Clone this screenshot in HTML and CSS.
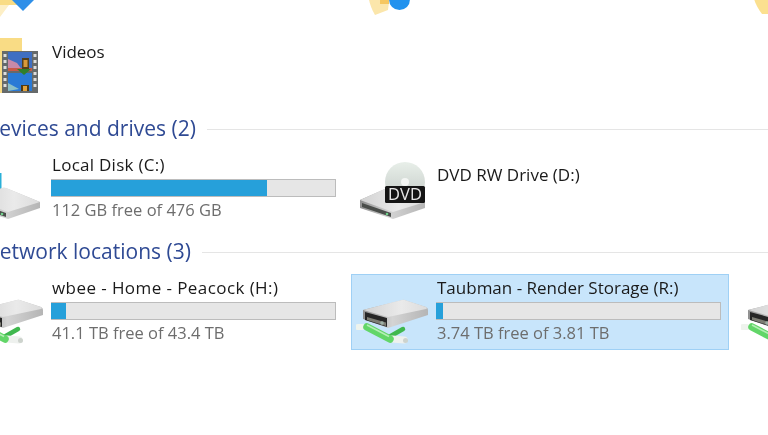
FILE: index.html
```html
<!DOCTYPE html>
<html lang="en">
<head>
<meta charset="utf-8">
<title>This PC</title>
<link rel="stylesheet" href="styles.css">
</head>
<body>
<svg class="defs" width="0" height="0" aria-hidden="true">
  <defs>
    <linearGradient id="topface" x1="0" y1="0" x2="1" y2="0">
      <stop offset="0" stop-color="#d2d2d2"/><stop offset="0.6" stop-color="#eaeaea"/><stop offset="1" stop-color="#dcdcdc"/>
    </linearGradient>
    <linearGradient id="frontface" x1="0" y1="0" x2="1" y2="0">
      <stop offset="0" stop-color="#8f8f8f"/><stop offset="0.45" stop-color="#d4d4d4"/><stop offset="1" stop-color="#b5b5b5"/>
    </linearGradient>
    <linearGradient id="disc" x1="0" y1="0" x2="0" y2="1">
      <stop offset="0" stop-color="#e8efe9"/><stop offset="1" stop-color="#c3c9c6"/>
    </linearGradient>
    <symbol id="netdrive" viewBox="0 0 72 72">
      <path d="M7 33 46 23 Q48 22.500 50 23.500 L70 30 Q72 31 72 33 L72 38 32 51 7 42Z" fill="url(#frontface)"/>
      <path d="M7 33 46 23 Q48 22.500 50 23.500 L70 30 Q72 31 70 32 L32 40Z" fill="url(#topface)"/>
      <path d="M9 35 31 41 31 50 9 43Z" fill="#262626"/>
      <path d="M11 40 30 45.500 30 49 11 43Z" fill="#7d7d74"/>
      <circle cx="26" cy="46" r="1.800" fill="#9fb0a6"/>
      <path d="M33 60 47 52" stroke="#3fb84e" stroke-width="4.500" stroke-linecap="round" fill="none"/>
      <path d="M6 50 2 50" stroke="#eef3ed" stroke-width="6" stroke-linecap="round" fill="none"/>
      <path d="M36 62 48 63" stroke="#eef1ee" stroke-width="7" stroke-linecap="round" fill="none"/>
      <circle cx="49.500" cy="63.500" r="2.500" fill="#cdd3cd"/>
      <path d="M11 50 34 62" stroke="#62d668" stroke-width="7.500" stroke-linecap="round" fill="none"/>
      <path d="M11 48 33 59.500" stroke="#b5efb5" stroke-width="1.500" fill="none"/>
    </symbol>
    <symbol id="localdrive" viewBox="0 0 72 72">
      <path d="M4 46 31 34 Q33 33.500 35 34 L69 48 69 54 37 65 4 54Z" fill="url(#frontface)"/>
      <path d="M4 46 31 34 Q33 33.500 35 34 L69 48 37 58Z" fill="url(#topface)"/>
      <path d="M6 49 35 59 35 63 6 53Z" fill="#4a4d4a"/>
      <circle cx="31" cy="60" r="1.300" fill="#6fd08a"/>
    </symbol>
  </defs>
</svg>

<main class="view">
  <div class="row">
    <div class="tile">
      <svg class="icon" viewBox="0 0 72 72" aria-hidden="true">
        <path d="M29 30H51V50H38L29 62Z" fill="#fdefc6"/>
        <path d="M29 30H52V50H29Z" fill="#f9dc85"/>
        <path d="M41 40 63 40 63 45 52 56 41 45Z" fill="#2f8fe8"/>
      </svg>
    </div>
    <div class="tile">
      <svg class="icon" viewBox="0 0 72 72" aria-hidden="true">
        <path d="M12 40H34L32 55 19 60Q14 52 12 40Z" fill="#fbe6ab"/>
        <path d="M24 40H33V49H24Z" fill="#f6c760"/>
        <circle cx="43.500" cy="44.500" r="10.500" fill="#2192ee"/>
      </svg>
    </div>
    <div class="tile">
      <svg class="icon" viewBox="0 0 72 72" aria-hidden="true">
        <path d="M12 40H30V59H21Q14 50 12 40Z" fill="#fbe08f"/>
      </svg>
    </div>
  </div>

  <div class="row">
    <div class="tile">
      <svg class="icon" viewBox="0 0 72 72" aria-hidden="true">
        <path d="M29 7H51V21H29Z" fill="#f9dc85"/>
        <path d="M29 21H34V62H29Z" fill="#f9dc85"/>
        <rect x="31" y="20" width="36" height="42" fill="#666a6b"/>
        <g fill="#dedede">
          <rect x="32.500" y="23" width="3" height="3"/><rect x="32.500" y="29" width="3" height="3"/><rect x="32.500" y="35" width="3" height="3"/><rect x="32.500" y="41" width="3" height="3"/><rect x="32.500" y="47" width="3" height="3"/><rect x="32.500" y="53" width="3" height="3"/>
          <rect x="62.500" y="23" width="3" height="3"/><rect x="62.500" y="29" width="3" height="3"/><rect x="62.500" y="35" width="3" height="3"/><rect x="62.500" y="41" width="3" height="3"/><rect x="62.500" y="47" width="3" height="3"/><rect x="62.500" y="53" width="3" height="3"/>
        </g>
        <rect x="37" y="21" width="24" height="19" fill="#3f6fc2"/>
        <path d="M37 28 46 32 52 40H37Z" fill="#c98aa8"/>
        <rect x="37" y="37" width="24" height="3" fill="#c95a48"/>
        <rect x="37" y="42" width="24" height="18" fill="#2a7ad6"/>
        <path d="M37 52 48 58 37 60Z" fill="#8cc0c8"/>
        <path d="M51 27H58V39H51Z" fill="#54401c"/>
        <rect x="52.500" y="29" width="4" height="7" fill="#d89a3a"/>
        <path d="M50 54H58V60H50Z" fill="#4f3a14"/>
        <rect x="52" y="55" width="4" height="5" fill="#e2a33c"/>
        <path d="M46 38 60 38 53 44Z" fill="#2f7f2a"/>
      </svg>
      <div class="text plain"><div class="name">Videos</div></div>
    </div>
  </div>

  <div class="heading"><h2 class="title">Devices and drives (2)</h2><span class="rule"></span></div>
  <div class="row">
    <div class="tile">
      <svg class="icon" viewBox="0 0 72 72" aria-hidden="true">
        <path d="M27 19H30.500V39H27Z" fill="#2ab0d8"/>
        <use href="#localdrive" width="72" height="72"/>
      </svg>
      <div class="text">
        <div class="name loose">Local Disk (C:)</div>
        <div class="bar"><div class="fill" style="width:76%"></div></div>
        <div class="detail">112 GB free of 476 GB</div>
      </div>
    </div>
    <div class="tile">
      <svg class="icon" viewBox="0 0 72 72" aria-hidden="true">
        <use href="#localdrive" width="72" height="72"/>
        <circle cx="49" cy="28" r="20" fill="url(#disc)"/>
        <circle cx="49" cy="28" r="4" fill="#f4f6f4"/>
        <rect x="29" y="32" width="40" height="17" rx="1.500" fill="#151515"/>
        <text class="dvd" x="49" y="46" text-anchor="middle">DVD</text>
      </svg>
      <div class="text plain"><div class="name">DVD RW Drive (D:)</div></div>
    </div>
  </div>

  <div class="heading"><h2 class="title">Network locations (3)</h2><span class="rule"></span></div>
  <div class="row">
    <div class="tile">
      <svg class="icon" aria-hidden="true"><use href="#netdrive" width="72" height="72"/></svg>
      <div class="text">
        <div class="name looser">wbee - Home - Peacock (H:)</div>
        <div class="bar"><div class="fill" style="width:5%"></div></div>
        <div class="detail">41.1 TB free of 43.4 TB</div>
      </div>
    </div>
    <div class="tile selected">
      <svg class="icon" aria-hidden="true"><use href="#netdrive" width="72" height="72"/></svg>
      <div class="text">
        <div class="name">Taubman - Render Storage (R:)</div>
        <div class="bar"><div class="fill" style="width:2%"></div></div>
        <div class="detail">3.74 TB free of 3.81 TB</div>
      </div>
    </div>
    <div class="tile">
      <svg class="icon" aria-hidden="true"><use href="#netdrive" width="72" height="72"/></svg>
    </div>
  </div>
</main>
</body>
</html>
```

FILE: styles.css
```css
html, body {
  margin: 0;
  padding: 0;
  width: 768px;
  height: 435px;
  overflow: hidden;
  background: #fff;
}

.defs {
  position: absolute;
}

.view {
  width: 1200px;
  margin: -48px 0 0 -34px;
  font-family: "Open Sans", "Noto Sans", sans-serif;
  filter: blur(0.6px);
}

.row {
  display: flex;
  gap: 7px;
}

.tile {
  box-sizing: border-box;
  flex: none;
  display: flex;
  align-items: flex-start;
  width: 378px;
  height: 76px;
  padding: 2px 0 0 4px;
  border: 1px solid transparent;
}

.selected {
  background: #c8e5fb;
  border-color: #9fd0f5;
}

.icon {
  flex: none;
  width: 72px;
  height: 72px;
  margin-right: 8px;
}

.text {
  width: 285px;
  margin-top: 1px;
}

.plain {
  margin-top: 11px;
}

.name {
  height: 20px;
  padding-left: 1px;
  font-size: 17px;
  line-height: 20px;
  color: #1a1a1a;
  white-space: nowrap;
}

.loose {
  letter-spacing: 0.27px;
}

.looser {
  letter-spacing: 0.42px;
}

.bar {
  box-sizing: border-box;
  height: 18px;
  margin-top: 4px;
  background: #e6e6e6;
  border: 1px solid #bcbcbc;
}

.fill {
  height: 100%;
  margin: 0 0 0 -1px;
  padding-left: 1px;
  background: #26a0da;
}

.detail {
  height: 20px;
  margin-top: 3px;
  padding-left: 1px;
  font-size: 16.5px;
  line-height: 20px;
  color: #6d6d6d;
  white-space: nowrap;
}

.dvd {
  font-family: "Open Sans", sans-serif;
  font-size: 16.5px;
  fill: #e8e8e8;
}

.heading {
  display: flex;
  align-items: center;
  gap: 11px;
  height: 47px;
  padding-left: 18px;
}

.title {
  margin: 0;
  padding-top: 1px;
  font-size: 21px;
  line-height: 26px;
  font-weight: 400;
  color: #2f4a94;
  white-space: nowrap;
}

.rule {
  flex: 1;
  height: 1px;
  margin-top: 3px;
  background: #e5e5e5;
}
```
